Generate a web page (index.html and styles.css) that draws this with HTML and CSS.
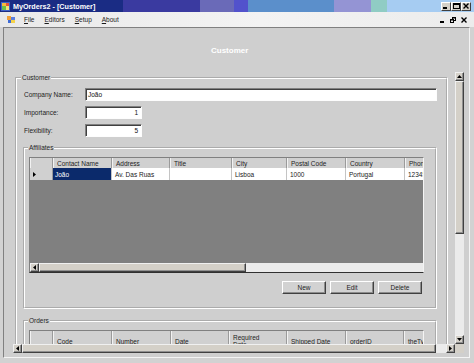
FILE: index.html
```html
<!DOCTYPE html>
<html>
<head>
<meta charset="utf-8">
<title>MyOrders2 - [Customer]</title>
<link rel="stylesheet" href="styles.css">
</head>
<body>
<div class="app">
  <div class="titlebar">
    <svg class="ticon" width="9" height="9" viewBox="0 0 9 9">
      <rect x="0" y="0" width="9" height="9" fill="#3d62c8"/>
      <rect x="1" y="1" width="4" height="3" fill="#f6b93b"/>
      <rect x="5" y="1" width="3" height="3" fill="#e2553a"/>
      <rect x="1" y="4" width="4" height="4" fill="#6cc04a"/>
      <rect x="5" y="4" width="3" height="4" fill="#f3e27a"/>
    </svg>
    <span class="ttext">MyOrders2 - [Customer]</span>
    <div class="wbtns">
      <span class="wbtn"><svg width="6" height="6" viewBox="0 0 6 6"><rect x="0" y="4" width="4" height="2" fill="#000"/></svg></span>
      <span class="wbtn"><svg width="7" height="6" viewBox="0 0 7 6"><rect x="0.5" y="0.5" width="6" height="5" fill="none" stroke="#000"/><rect x="0" y="0" width="7" height="2" fill="#000"/></svg></span>
      <span class="wbtn"><svg width="6" height="6" viewBox="0 0 6 6"><path d="M0.5 0.5 L5.5 5.5 M5.5 0.5 L0.5 5.5" stroke="#000" stroke-width="1.4"/></svg></span>
    </div>
  </div>

  <div class="menubar">
    <svg class="micon" width="9" height="8" viewBox="0 0 9 8">
      <rect x="0" y="0" width="4" height="4" fill="#f0a23a"/>
      <rect x="4" y="1" width="4" height="3" fill="#5a7fe0"/>
      <rect x="1" y="4" width="3" height="3" fill="#3e6bd6"/>
      <rect x="4" y="4" width="4" height="3" fill="#f4d24a"/>
    </svg>
    <span class="mi"><u>F</u>ile</span>
    <span class="mi"><u>E</u>ditors</span>
    <span class="mi"><u>S</u>etup</span>
    <span class="mi"><u>A</u>bout</span>
    <div class="mdictl">
      <svg width="5" height="6" viewBox="0 0 5 6"><rect x="0" y="4" width="4" height="2" fill="#000"/></svg>
      <svg width="6" height="6" viewBox="0 0 6 6"><rect x="2" y="0" width="4" height="1.5" fill="#000"/><rect x="2.5" y="0.5" width="3" height="3" fill="none" stroke="#000"/><rect x="0.5" y="2.5" width="3" height="3" fill="#ececec" stroke="#000"/><rect x="0" y="2" width="4" height="1.5" fill="#000"/></svg>
      <svg width="6" height="6" viewBox="0 0 6 6"><path d="M0.5 0.5 L5.5 5.5 M5.5 0.5 L0.5 5.5" stroke="#000" stroke-width="1.4"/></svg>
    </div>
  </div>

  <div class="frame">
    <div class="client">
      <div class="hdr">Customer</div>
      <div class="panel">
        <div class="view">
          <fieldset class="gb gb-cust">
            <legend>Customer</legend>
            <div class="rows">
              <div class="frow"><span class="lbl">Company Name:</span><div class="tb tb-wide">João</div></div>
              <div class="frow"><span class="lbl">Importance:</span><div class="tb tb-num">1</div></div>
              <div class="frow"><span class="lbl">Flexibility:</span><div class="tb tb-num">5</div></div>
            </div>

            <fieldset class="gb gb-aff">
              <legend>Affiliates</legend>
              <div class="dg dg-aff">
                <div class="dg-head cols-aff">
                  <div class="hc"></div>
                  <div class="hc">Contact Name</div>
                  <div class="hc">Address</div>
                  <div class="hc">Title</div>
                  <div class="hc">City</div>
                  <div class="hc">Postal Code</div>
                  <div class="hc">Country</div>
                  <div class="hc">Phone</div>
                </div>
                <div class="dg-row cols-aff">
                  <div class="rh"><svg width="3" height="5" viewBox="0 0 3 5"><polygon points="0,0 3,2.5 0,5" fill="#000"/></svg></div>
                  <div class="dc sel">João</div>
                  <div class="dc">Av. Das Ruas</div>
                  <div class="dc"></div>
                  <div class="dc">Lisboa</div>
                  <div class="dc">1000</div>
                  <div class="dc">Portugal</div>
                  <div class="dc">12345</div>
                </div>
                <div class="dg-fill"></div>
                <div class="hsb hsb-grid">
                  <div class="sbtn"><svg width="3" height="5" viewBox="0 0 3 5"><polygon points="3,0 0,2.5 3,5" fill="#000"/></svg></div>
                  <div class="thumb thumb-grid"></div>
                  <div class="track"></div>
                </div>
              </div>
              <div class="btns">
                <div class="btn">New</div>
                <div class="btn">Edit</div>
                <div class="btn">Delete</div>
              </div>
            </fieldset>

            <fieldset class="gb gb-ord">
              <legend>Orders</legend>
              <div class="dg dg-ord">
                <div class="dg-head dg-head-tall cols-ord">
                  <div class="hc"></div>
                  <div class="hc">Code</div>
                  <div class="hc">Number</div>
                  <div class="hc">Date</div>
                  <div class="hc hc-wrap">Required Date</div>
                  <div class="hc">Shipped Date</div>
                  <div class="hc">orderID</div>
                  <div class="hc">theType</div>
                </div>
                <div class="dg-fill"></div>
              </div>
            </fieldset>
          </fieldset>
        </div>

        <div class="vsb">
          <div class="sbtn"><svg width="5" height="3" viewBox="0 0 5 3"><polygon points="0,3 2.5,0 5,3" fill="#000"/></svg></div>
          <div class="thumb thumb-v"></div>
          <div class="track"></div>
          <div class="sbtn"><svg width="5" height="3" viewBox="0 0 5 3"><polygon points="0,0 2.5,3 5,0" fill="#000"/></svg></div>
        </div>

        <div class="hsb hsb-panel">
          <div class="sbtn"><svg width="3" height="5" viewBox="0 0 3 5"><polygon points="3,0 0,2.5 3,5" fill="#000"/></svg></div>
          <div class="thumb thumb-h"></div>
          <div class="track"></div>
          <div class="sbtn"><svg width="3" height="5" viewBox="0 0 3 5"><polygon points="0,0 3,2.5 0,5" fill="#000"/></svg></div>
        </div>

        <div class="corner"></div>
      </div>
    </div>
  </div>
</div>
</body>
</html>
```

FILE: styles.css
```css
* { box-sizing: border-box; margin: 0; padding: 0; }
html, body { width: 474px; height: 363px; overflow: hidden; }
body {
  font-family: "Liberation Sans", Arial, sans-serif;
  font-size: 6.5px;
  color: #1e1e1e;
  background: #cfcfcf;
}

.app {
  width: 474px;
  height: 363px;
  display: flex;
  flex-direction: column;
  background: #d2d2d2;
}

/* ---------- title bar ---------- */
.titlebar {
  height: 12px;
  flex: none;
  display: flex;
  align-items: center;
  padding-left: 1px;
  color: #fff;
  background: linear-gradient(to right,
    #1a2c84 0, #1a2c84 123px,
    #3a3aa0 123px, #3a3aa0 200px,
    #6a6ab8 200px, #6a6ab8 234px,
    #5252cc 234px, #5252cc 248px,
    #5b8fcb 248px, #5b8fcb 334px,
    #9494d4 334px, #9494d4 371px,
    #90ccc4 371px, #90ccc4 387px,
    #a6ccf2 387px);
}
.ticon { display: block; margin-right: 3px; }
.ttext { font-weight: bold; font-size: 7.2px; flex: 1; white-space: nowrap; }
.wbtns { display: flex; margin-right: 3px; }
.wbtn {
  width: 10px;
  height: 9px;
  display: flex;
  align-items: center;
  justify-content: center;
  background: #d4d0c8;
  border: 1px solid;
  border-color: #fff #404040 #404040 #fff;
}
.wbtn svg { display: block; }

/* ---------- menu bar ---------- */
.menubar {
  height: 15px;
  flex: none;
  display: flex;
  align-items: center;
  padding-left: 7px;
  background: linear-gradient(to right, #e9e9e9, #f3f3f3 55%, #ececec);
}
.micon { display: block; margin-right: 3px; }
.mi { padding: 0 5px; white-space: nowrap; color: #1a1a1a; }
.mi u { text-decoration-thickness: 1px; text-underline-offset: 1px; }
.mdictl {
  margin-left: auto;
  margin-right: 7px;
  display: flex;
  align-items: center;
  gap: 5px;
}
.mdictl svg { display: block; }

/* ---------- MDI client ---------- */
.frame {
  flex: 1;
  padding: 0 4px 5px 3px;
}
.client {
  height: 100%;
  display: flex;
  flex-direction: column;
  background: #cfcfcf;
  border: 1px solid;
  border-color: #808080 #f4f4f4 #f4f4f4 #808080;
}
.hdr {
  height: 44px;
  flex: none;
  display: flex;
  align-items: center;
  padding-left: 207px;
  font-weight: bold;
  font-size: 8px;
  color: #fff;
}

/* ---------- scrolling panel ---------- */
.panel {
  margin-left: 9px;
  width: 451px;
  height: 281px;
  flex: none;
  display: grid;
  grid-template-columns: 442px 9px;
  grid-template-rows: 272px 9px;
}
.view { overflow: hidden; }
.corner { background: #d4d0c8; }

.vsb {
  display: flex;
  flex-direction: column;
  background: #ececec;
}
.hsb {
  display: flex;
  background: #ececec;
}
.sbtn {
  width: 9px;
  height: 9px;
  flex: none;
  display: flex;
  align-items: center;
  justify-content: center;
  background: #d4d0c8;
  border: 1px solid;
  border-color: #f0f0f0 #404040 #404040 #f0f0f0;
  box-shadow: inset -1px -1px 0 #909090;
}
.sbtn svg { display: block; }
.thumb {
  background: #d4d0c8;
  border: 1px solid;
  border-color: #f0f0f0 #404040 #404040 #f0f0f0;
  box-shadow: inset -1px -1px 0 #909090;
  flex: none;
}
.track { flex: 1; background: #ebebeb; }
.thumb-v { height: 153px; }
.thumb-h { width: 414px; }
.thumb-grid { width: 207px; }

/* ---------- group boxes ---------- */
.gb {
  border: 2px groove #ffffff;
  min-width: 0;
}
.gb legend {
  line-height: 8px;
  height: 8px;
  padding: 0 1px;
  margin-left: -2px;
  color: #262626;
}
.gb-cust {
  margin: 2px 0 0 2px;
  width: 433px;
  padding: 6px 9px 0 6px;
}
.rows {
  display: flex;
  flex-direction: column;
  gap: 5px;
  padding-left: 1px;
}
.frow {
  height: 13px;
  display: flex;
  align-items: center;
}
.lbl { width: 61px; flex: none; white-space: nowrap; color: #222; }
.tb {
  height: 13px;
  display: flex;
  align-items: center;
  background: #fff;
  border: 1px solid;
  border-color: #808080 #fdfdfd #fdfdfd #808080;
  box-shadow: inset 1px 1px 0 #404040;
  color: #111;
  white-space: nowrap;
}
.tb-wide { width: 352px; padding-left: 2px; }
.tb-num { width: 57px; justify-content: flex-end; padding-right: 3px; }

.gb-aff {
  margin-top: 7px;
  width: 414px;
  padding: 5px 0 13px 4px;
}
.gb-aff legend { margin-left: -1px; }
.gb-ord {
  margin-top: 8px;
  width: 414px;
  height: 60px;
  padding: 5px 0 0 4px;
}
.gb-ord legend { margin-left: -1px; }

/* ---------- data grids ---------- */
.dg {
  width: 395px;
  display: flex;
  flex-direction: column;
  background: #808080;
  border: 1px solid;
  border-color: #808080 #f4f4f4 #303030 #808080;
  box-shadow: inset 1px 1px 0 #404040;
  overflow: hidden;
}
.dg-aff { height: 116px; }
.dg-ord { height: 50px; }

.cols-aff, .cols-ord {
  display: grid;
  grid-template-columns: 23px 59px 58px 62px 55px 59px 59px 60px;
  flex: none;
}
.cols-ord { grid-template-columns: 23px 59px 59px 58px 58px 59px 58px 60px; }

.dg-head { height: 10px; background: #d0d0d0; }
.dg-head-tall { height: 20px; }
.hc {
  display: flex;
  align-items: center;
  padding-left: 4px;
  white-space: nowrap;
  overflow: hidden;
  border-right: 1px solid #9a9a9a;
  box-shadow: inset 1px 0 0 #f2f2f2;
  color: #222;
}
.hc-wrap {
  white-space: normal;
  line-height: 7px;
  align-items: flex-start;
  padding-top: 3px;
  padding-right: 22px;
}

.dg-row { height: 12px; background: #fff; }
.rh {
  display: flex;
  align-items: center;
  padding-left: 3px;
  background: #d0d0d0;
  border-right: 1px solid #9a9a9a;
}
.rh svg { display: block; }
.dc {
  display: flex;
  align-items: center;
  padding-left: 3px;
  white-space: nowrap;
  overflow: hidden;
  border-right: 1px solid #c4c4c4;
  color: #1a1a1a;
}
.dc.sel { background: #0b2a6b; color: #fff; padding-left: 2px; }
.dg-fill { flex: 1; background: #808080; }
.hsb-grid { height: 9px; flex: none; }

.btns {
  width: 395px;
  margin-top: 8px;
  padding-right: 2px;
  display: flex;
  justify-content: flex-end;
  gap: 4px;
}
.btn {
  width: 44px;
  height: 13px;
  display: flex;
  align-items: center;
  justify-content: center;
  background: #d2d2d2;
  border: 1px solid;
  border-color: #ffffff #404040 #404040 #ffffff;
  box-shadow: inset -1px -1px 0 #8c8c8c;
  color: #1e1e1e;
}
```
